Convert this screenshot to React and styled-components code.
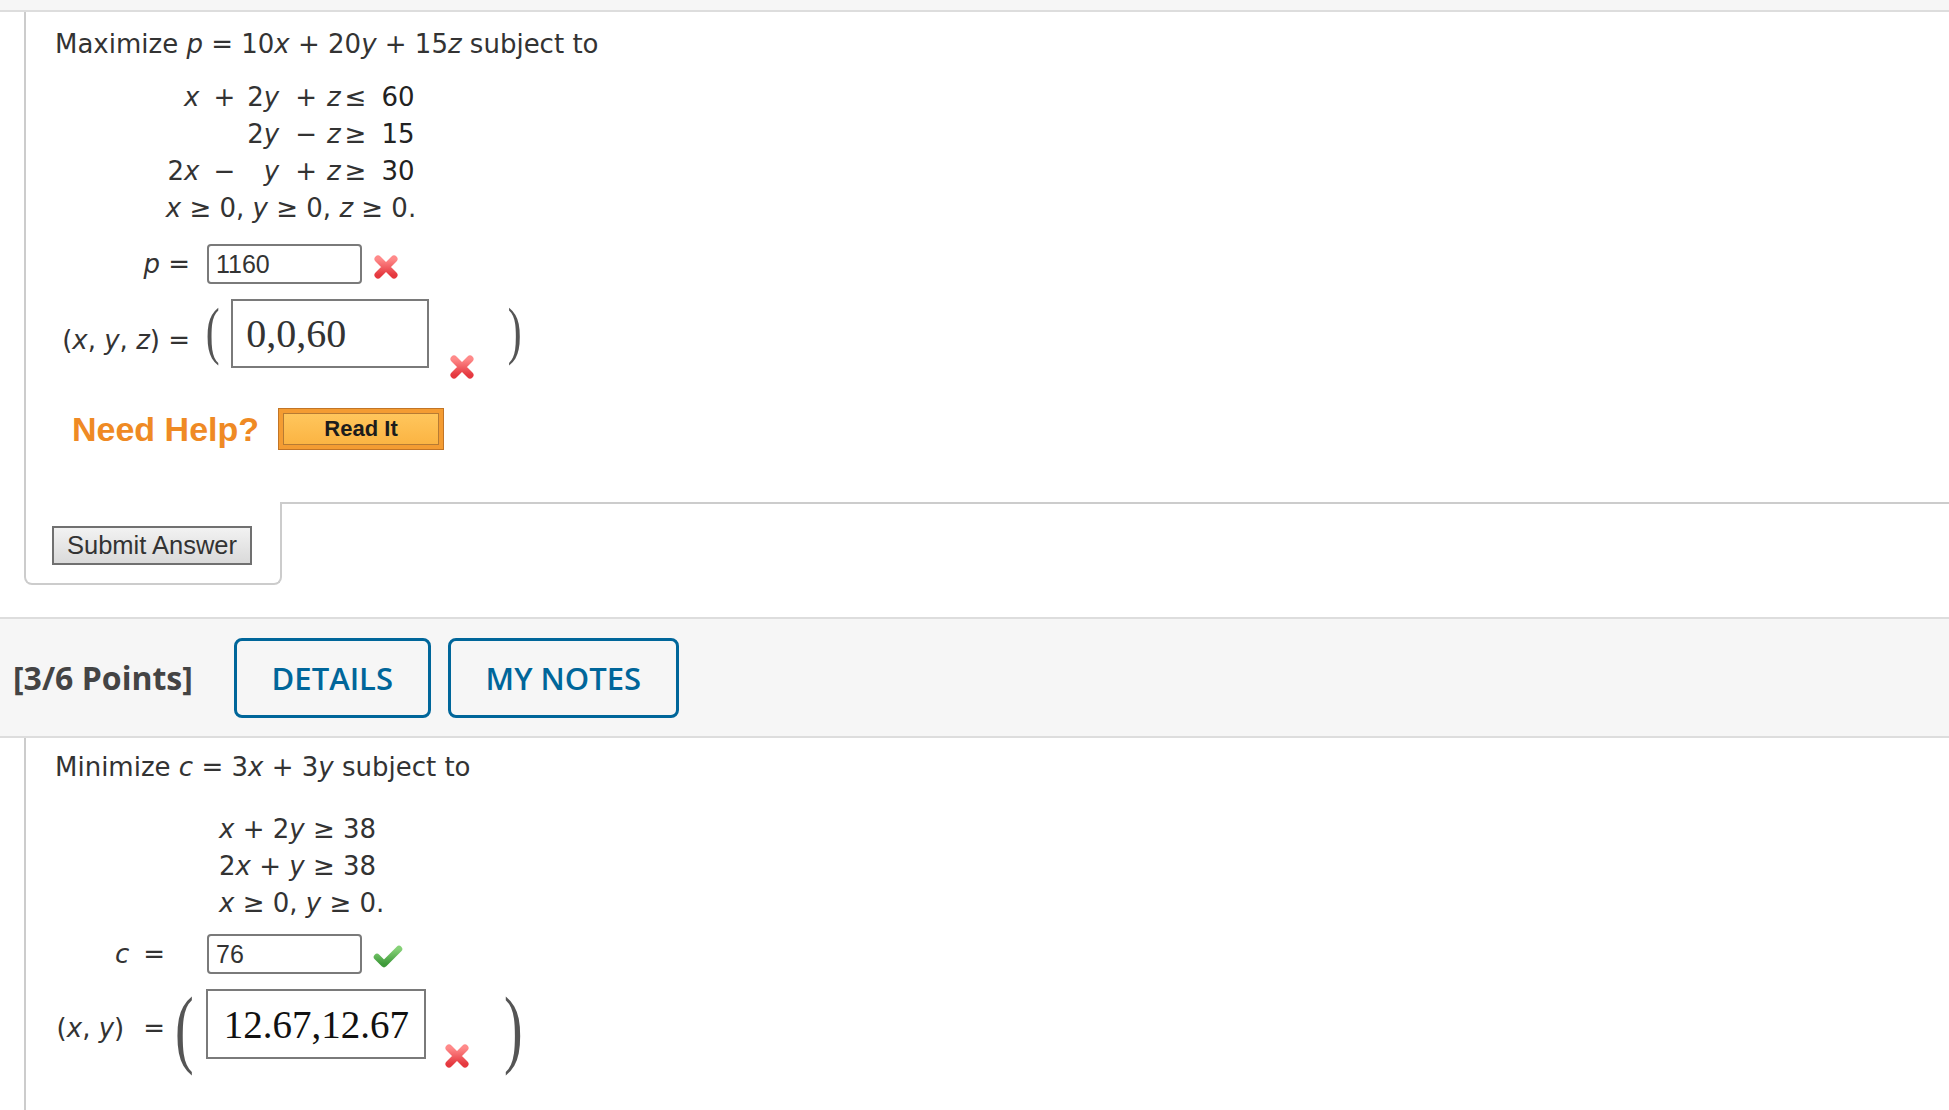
import React from "react";
import styled, { createGlobalStyle } from "styled-components";

const GlobalStyle = createGlobalStyle`
  body {
    margin: 0;
    background: #fff;
    color: #333;
    font-family: "DejaVu Sans", Verdana, sans-serif;
  }
`;

function RedX() {
  return (
    <svg width="26" height="26" viewBox="0 0 26 26">
      <defs>
        <linearGradient id="xg" x1="0" y1="0" x2="0" y2="1">
          <stop offset="0" stopColor="#ff8a8a" />
          <stop offset="1" stopColor="#e5383f" />
        </linearGradient>
      </defs>
      <path
        d="M5 5 L21 21 M21 5 L5 21"
        stroke="url(#xg)"
        strokeWidth="7"
        strokeLinecap="round"
        fill="none"
      />
    </svg>
  );
}

function GreenCheck() {
  return (
    <svg width="30" height="25" viewBox="0 0 30 25">
      <defs>
        <linearGradient id="cg" x1="0" y1="0" x2="0" y2="1">
          <stop offset="0" stopColor="#86d177" />
          <stop offset="1" stopColor="#3e9a3a" />
        </linearGradient>
      </defs>
      <path
        d="M4 13 L11 20 L26 5"
        stroke="url(#cg)"
        strokeWidth="6.5"
        strokeLinecap="round"
        strokeLinejoin="round"
        fill="none"
      />
    </svg>
  );
}

// rows of the first system, one token per column
const rows = [
  [<V>x</V>, "+", <>2<V>y</V></>, "+", <V>z</V>, "≤", "60"],
  ["", "", <>2<V>y</V></>, "−", <V>z</V>, "≥", "15"],
  [<>2<V>x</V></>, "−", <V>y</V>, "+", <V>z</V>, "≥", "30"],
];
const colGaps = [0, 14, 12, 16, 10, 4, 15];

const TopStrip = styled.div`
  height: 10px;
  background: #f6f6f6;
  border-bottom: 2px solid #ddd;
`;

const Question = styled.section`
  margin-left: 24px;
`;

const Body = styled.div`
  border-left: 2px solid #ccc;
  padding: ${(p) => p.$top}px 0 ${(p) => p.$bottom}px 29px;
`;

const Prompt = styled.p`
  margin: 0;
  font-size: 26px;
  line-height: 37px;
  color: #333;
`;

function V({ children }) {
  return <Var>{children}</Var>;
}

const Var = styled.i`
  font-style: italic;
`;

const Display = styled.div`
  width: 472px;
  margin-top: 16px;
  display: flex;
  flex-direction: column;
  align-items: center;
  font-size: 26px;
  line-height: 37px;
`;

const System = styled.div`
  display: grid;
  grid-template-columns: repeat(7, auto);
  justify-items: end;
  white-space: pre;
`;

const Cell = styled.span`
  padding-left: ${(p) => p.$gap}px;
  color: ${(p) => (p.$rhs ? "#222" : "#333")};
`;

const Stack = styled.div`
  margin: ${(p) => p.$margin};
  font-size: 26px;
  line-height: 37px;
  white-space: pre;
`;

const Answers = styled.div`
  display: grid;
  grid-template-columns: ${(p) => p.$label}px auto;
  column-gap: ${(p) => p.$gap}px;
  row-gap: ${(p) => p.$rowGap}px;
  align-items: center;
  margin-top: ${(p) => p.$top}px;
`;

const Label = styled.div`
  justify-self: end;
  font-size: 26px;
  white-space: pre;
  color: #333;
`;

const Eq = styled.span`
  margin-left: ${(p) => p.$gap}px;
`;

const Line = styled.div`
  display: flex;
  align-items: center;
  gap: 11px;
  margin-left: ${(p) => p.$indent || 0}px;
`;

const Field = styled.div`
  box-sizing: border-box;
  width: 155px;
  height: 40px;
  border: 2px solid #7a7a7a;
  border-radius: 4px;
  padding-left: 7px;
  display: flex;
  align-items: center;
  font-family: "Liberation Sans", Arial, sans-serif;
  font-size: 25px;
  color: #333;
`;

const Tuple = styled.div`
  display: flex;
  align-items: flex-start;
  height: ${(p) => p.$height}px;
`;

const Paren = styled.span`
  font-family: "Liberation Serif", "Times New Roman", serif;
  font-size: ${(p) => p.$size}px;
  line-height: 1;
  color: #555;
  margin-top: ${(p) => p.$top}px;
  margin-left: ${(p) => p.$left || 0}px;
  transform: scaleX(0.65);
`;

const BigField = styled.div`
  box-sizing: border-box;
  width: ${(p) => p.$width}px;
  height: ${(p) => p.$height}px;
  margin-left: ${(p) => p.$left}px;
  margin-top: ${(p) => p.$top}px;
  border: 2px solid #7a7a7a;
  padding-left: ${(p) => p.$pad}px;
  display: flex;
  align-items: center;
  font-family: "Liberation Serif", "Times New Roman", serif;
  font-size: ${(p) => p.$size}px;
  color: ${(p) => p.$color};
`;

const Mark = styled.span`
  display: flex;
  margin-left: ${(p) => p.$left || 0}px;
  margin-top: ${(p) => p.$top}px;
`;

const HelpRow = styled.div`
  display: flex;
  align-items: center;
  gap: 19px;
  margin: 27px 0 0 17px;
`;

const NeedHelp = styled.span`
  font-family: "Liberation Sans", Arial, sans-serif;
  font-weight: bold;
  font-size: 34px;
  color: #ef8a24;
`;

const ReadIt = styled.button`
  box-sizing: border-box;
  width: 166px;
  height: 42px;
  padding: 4px;
  border: 1px solid #c27526;
  background: #f49c32;
  cursor: pointer;
`;

const ReadItFace = styled.span`
  box-sizing: border-box;
  display: flex;
  align-items: center;
  justify-content: center;
  height: 100%;
  border: 1px solid #b77b33;
  background: linear-gradient(#ffc65c, #fbb443);
  font-family: "Liberation Sans", Arial, sans-serif;
  font-weight: bold;
  font-size: 22px;
  color: #1c1c1c;
`;

const Footer = styled.div`
  display: flex;
`;

const SubmitCell = styled.div`
  width: 228px;
  padding: 24px 0 18px 26px;
  border: 2px solid #ccc;
  border-top: none;
  border-radius: 0 0 8px 8px;
`;

const Filler = styled.div`
  flex: 1;
  border-top: 2px solid #ccc;
`;

const SubmitButton = styled.button`
  box-sizing: border-box;
  width: 200px;
  height: 39px;
  padding: 0;
  border: 2px solid #707070;
  background: linear-gradient(#f2f2f2, #dadada);
  font-family: "Liberation Sans", Arial, sans-serif;
  font-size: 25.5px;
  color: #333;
`;

const PointsBar = styled.div`
  margin-top: 32px;
  height: 117px;
  background: #f6f6f6;
  border-top: 2px solid #ddd;
  border-bottom: 2px solid #ddd;
  display: flex;
  align-items: center;
  padding-left: 13px;
  font-family: "Open Sans", sans-serif;
`;

const Points = styled.span`
  font-weight: 700;
  font-size: 32px;
  color: #444;
  margin-right: 41px;
`;

const TabButton = styled.button`
  box-sizing: border-box;
  width: ${(p) => p.$width}px;
  height: 80px;
  margin-right: 17px;
  border: 3px solid #00669a;
  border-radius: 8px;
  background: transparent;
  font-family: "Open Sans", sans-serif;
  font-weight: 600;
  font-size: 31px;
  color: #00669a;
  padding: 0;
`;

export default function App() {
  return (
    <>
      <GlobalStyle />
      <TopStrip />

      <Question>
        <Body $top={14} $bottom={52}>
          <Prompt>
            Maximize <V>p</V> = 10<V>x</V> + 20<V>y</V> + 15<V>z</V> subject to
          </Prompt>
          <Display>
            <System>
              {rows.flatMap((row, r) =>
                row.map((tok, c) => (
                  <Cell key={`${r}-${c}`} $gap={colGaps[c]} $rhs={c === 6}>
                    {tok}
                  </Cell>
                ))
              )}
            </System>
            <span>
              <V>x</V> ≥ 0, <V>y</V> ≥ 0, <V>z</V> ≥ 0.
            </span>
          </Display>

          <Answers $label={135} $gap={17} $rowGap={15} $top={17}>
            <Label>
              <V>p</V> =
            </Label>
            <Line>
              <Field>1160</Field>
              <Mark $top={6}>
                <RedX />
              </Mark>
            </Line>
            <Label>
              (<V>x</V>, <V>y</V>, <V>z</V>) =
            </Label>
            <Tuple $height={82}>
              <Paren $size={64} $top={0} $left={-5}>(</Paren>
              <BigField $width={198} $height={69} $left={8} $top={0} $pad={13} $size={40} $color="#333">
                0,0,60
              </BigField>
              <Mark $left={20} $top={55}>
                <RedX />
              </Mark>
              <Paren $size={64} $top={0} $left={29}>)</Paren>
            </Tuple>
          </Answers>

          <HelpRow>
            <NeedHelp>Need Help?</NeedHelp>
            <ReadIt>
              <ReadItFace>Read It</ReadItFace>
            </ReadIt>
          </HelpRow>
        </Body>
        <Footer>
          <SubmitCell>
            <SubmitButton>Submit Answer</SubmitButton>
          </SubmitCell>
          <Filler />
        </Footer>
      </Question>

      <PointsBar>
        <Points>[3/6 Points]</Points>
        <TabButton $width={197}>DETAILS</TabButton>
        <TabButton $width={231}>MY NOTES</TabButton>
      </PointsBar>

      <Question>
        <Body $top={11} $bottom={42}>
          <Prompt>
            Minimize <V>c</V> = 3<V>x</V> + 3<V>y</V> subject to
          </Prompt>
          <Stack $margin="25px 0 0 164px">
            <div>
              <V>x</V> + 2<V>y</V> ≥ 38
            </div>
            <div>
              2<V>x</V> + <V>y</V> ≥ 38
            </div>
            <div>
              <V>x</V> ≥ 0, <V>y</V> ≥ 0.
            </div>
          </Stack>

          <Answers $label={110} $gap={9} $rowGap={14} $top={12}>
            <Label>
              <V>c</V>
              <Eq $gap={14}>=</Eq>
            </Label>
            <Line $indent={33}>
              <Field>76</Field>
              <Mark $top={4}>
                <GreenCheck />
              </Mark>
            </Line>
            <Label>
              (<V>x</V>, <V>y</V>)<Eq $gap={19}>=</Eq>
            </Label>
            <Tuple $height={80}>
              <Paren $size={86} $top={-3} $left={-4}>(</Paren>
              <BigField $width={220} $height={70} $left={7} $top={1} $pad={16} $size={39} $color="#111">
                12.67,12.67
              </BigField>
              <Mark $left={18} $top={55}>
                <RedX />
              </Mark>
              <Paren $size={86} $top={-3} $left={29}>)</Paren>
            </Tuple>
          </Answers>
        </Body>
      </Question>
    </>
  );
}
